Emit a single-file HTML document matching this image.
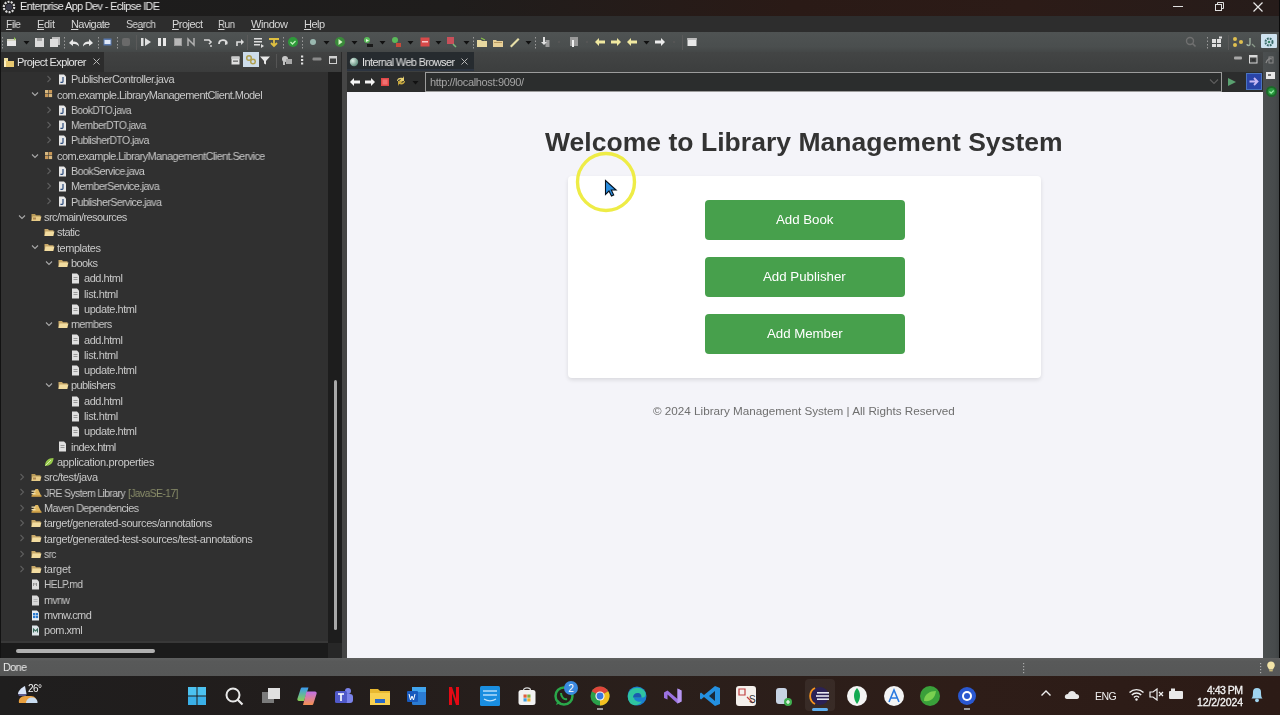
<!DOCTYPE html>
<html><head><meta charset="utf-8">
<style>
*{margin:0;padding:0;box-sizing:border-box}
html,body{width:1280px;height:715px;overflow:hidden;background:#2b2b2b;font-family:"Liberation Sans",sans-serif;position:relative}
.a{position:absolute}
.t{position:absolute;white-space:pre;will-change:transform}
</style></head><body>

<div class="a" style="left:0px;top:0px;width:1280px;height:16px;background:linear-gradient(90deg,#1c1c1c 0%,#1f1d1c 35%,#2a1a16 62%,#2c1b17 80%,#261c1a 100%);"></div>
<svg class="a" style="left:2px;top:0px;" width="14" height="14" viewBox="0 0 14 14"><circle cx="7" cy="7" r="5.2" fill="none" stroke="#d8d8d8" stroke-width="2.2" stroke-dasharray="2 1.2"/><circle cx="7" cy="7" r="3.2" fill="#3a3a48"/></svg>
<div class="t" style="left:20.00px;top:0.04px;font-size:11px;line-height:12.64px;color:#ececec;letter-spacing:-0.600px;transform:scaleX(0.9803);transform-origin:0 0;">Enterprise App Dev - Eclipse IDE</div>
<div class="a" style="left:1173px;top:6px;width:10px;height:1px;background:#e0e0e0;"></div>
<svg class="a" style="left:1213px;top:1px;" width="12" height="12" viewBox="0 0 12 12"><rect x="2.5" y="3.5" width="6" height="6" fill="none" stroke="#e0e0e0"/><path d="M4.5 3.5V1.5h6v6h-2" fill="none" stroke="#e0e0e0"/></svg>
<svg class="a" style="left:1252px;top:1px;" width="12" height="12" viewBox="0 0 12 12"><path d="M1.5 1.5l9 9M10.5 1.5l-9 9" stroke="#e8e8e8" stroke-width="1.2"/></svg>
<div class="a" style="left:0px;top:16px;width:1280px;height:16px;background:#2d2d2d;"></div>
<div class="t" style="left:6.00px;top:17.84px;font-size:11px;line-height:12.64px;color:#d6d6d6;letter-spacing:-0.600px;transform:scaleX(0.9414);transform-origin:0 0;"><u style="text-underline-offset:1px">F</u>ile</div>
<div class="t" style="left:37.00px;top:17.84px;font-size:11px;line-height:12.64px;color:#d6d6d6;letter-spacing:-0.323px;"><u style="text-underline-offset:1px">E</u>dit</div>
<div class="t" style="left:71.00px;top:17.84px;font-size:11px;line-height:12.64px;color:#d6d6d6;letter-spacing:-0.600px;transform:scaleX(0.9943);transform-origin:0 0;"><u style="text-underline-offset:1px">N</u>avigate</div>
<div class="t" style="left:126.00px;top:17.84px;font-size:11px;line-height:12.64px;color:#d6d6d6;letter-spacing:-0.600px;transform:scaleX(0.9416);transform-origin:0 0;">Se<u style="text-underline-offset:1px">a</u>rch</div>
<div class="t" style="left:172.00px;top:17.84px;font-size:11px;line-height:12.64px;color:#d6d6d6;letter-spacing:-0.542px;"><u style="text-underline-offset:1px">P</u>roject</div>
<div class="t" style="left:218.00px;top:17.84px;font-size:11px;line-height:12.64px;color:#d6d6d6;letter-spacing:-0.600px;transform:scaleX(0.8953);transform-origin:0 0;"><u style="text-underline-offset:1px">R</u>un</div>
<div class="t" style="left:251.00px;top:17.84px;font-size:11px;line-height:12.64px;color:#d6d6d6;letter-spacing:-0.425px;"><u style="text-underline-offset:1px">W</u>indow</div>
<div class="t" style="left:304.00px;top:17.84px;font-size:11px;line-height:12.64px;color:#d6d6d6;letter-spacing:-0.542px;"><u style="text-underline-offset:1px">H</u>elp</div>
<div class="a" style="left:0px;top:32px;width:1280px;height:20px;background:linear-gradient(#4f5353,#4a4e4e 75%,#444747);"></div>
<div id="toolbar">
<svg class="a" style="left:1px;top:36px;" width="3" height="13" viewBox="0 0 3 13"><rect x="1" y="1" width="1" height="1.5" fill="#9a9a9a"/><rect x="1" y="4.5" width="1" height="1.5" fill="#9a9a9a"/><rect x="1" y="8" width="1" height="1.5" fill="#9a9a9a"/><rect x="1" y="11" width="1" height="1.5" fill="#9a9a9a"/></svg>
<svg class="a" style="left:6px;top:36px;" width="12" height="12" viewBox="0 0 12 12"><rect x="1" y="3" width="9" height="7" fill="#e8e8e8"/><rect x="1" y="3" width="9" height="2" fill="#d0d0c0"/><path d="M8 1l2 2-2 1z" fill="#8bc34a"/></svg>
<svg class="a" style="left:23px;top:40px;" width="7" height="5" viewBox="0 0 7 5"><path d="M0.5 1h6l-3 3.5z" fill="#111"/></svg>
<svg class="a" style="left:34px;top:36px;" width="12" height="12" viewBox="0 0 12 12"><rect x="1" y="2" width="9" height="9" fill="#dcdcdc"/><rect x="3" y="2" width="5" height="3" fill="#a8a8a8"/></svg>
<svg class="a" style="left:49px;top:36px;" width="12" height="12" viewBox="0 0 12 12"><rect x="3" y="1" width="8" height="8" fill="#bcbcbc"/><rect x="1" y="3" width="8" height="8" fill="#dedede"/></svg>
<svg class="a" style="left:63px;top:36px;" width="3" height="13" viewBox="0 0 3 13"><rect x="1" y="1" width="1" height="1.5" fill="#9a9a9a"/><rect x="1" y="4.5" width="1" height="1.5" fill="#9a9a9a"/><rect x="1" y="8" width="1" height="1.5" fill="#9a9a9a"/><rect x="1" y="11" width="1" height="1.5" fill="#9a9a9a"/></svg>
<svg class="a" style="left:68px;top:36px;" width="12" height="12" viewBox="0 0 12 12"><path d="M1 7l4-4v2.5c3 0 6 1 6 5-1.5-2-3-2.5-6-2.5V10z" fill="#e8e8e8"/></svg>
<svg class="a" style="left:82px;top:36px;" width="12" height="12" viewBox="0 0 12 12"><path d="M11 7L7 3v2.5c-3 0-6 1-6 5 1.5-2 3-2.5 6-2.5V10z" fill="#e8e8e8"/></svg>
<svg class="a" style="left:97px;top:36px;" width="3" height="13" viewBox="0 0 3 13"><rect x="1" y="1" width="1" height="1.5" fill="#9a9a9a"/><rect x="1" y="4.5" width="1" height="1.5" fill="#9a9a9a"/><rect x="1" y="8" width="1" height="1.5" fill="#9a9a9a"/><rect x="1" y="11" width="1" height="1.5" fill="#9a9a9a"/></svg>
<svg class="a" style="left:102px;top:36px;" width="12" height="12" viewBox="0 0 12 12"><rect x="1.5" y="2.5" width="8" height="7" fill="#5a7ab0"/><rect x="2.5" y="4" width="6" height="4" fill="#dfe8f8"/></svg>
<svg class="a" style="left:116px;top:36px;" width="3" height="13" viewBox="0 0 3 13"><rect x="1" y="1" width="1" height="1.5" fill="#9a9a9a"/><rect x="1" y="4.5" width="1" height="1.5" fill="#9a9a9a"/><rect x="1" y="8" width="1" height="1.5" fill="#9a9a9a"/><rect x="1" y="11" width="1" height="1.5" fill="#9a9a9a"/></svg>
<svg class="a" style="left:120px;top:36px;" width="12" height="12" viewBox="0 0 12 12"><rect x="2" y="2" width="8" height="8" rx="2" fill="#6a6a6a"/></svg>
<div class="a" style="left:136px;top:35px;width:1px;height:15px;background:#5a5a5a;"></div>
<svg class="a" style="left:140px;top:36px;" width="12" height="12" viewBox="0 0 12 12"><rect x="1" y="2" width="2.5" height="8" fill="#e0e0e0"/><path d="M5 2l6 4-6 4z" fill="#e0e0e0"/></svg>
<svg class="a" style="left:156px;top:36px;" width="12" height="12" viewBox="0 0 12 12"><rect x="2" y="2" width="3" height="8" fill="#e8e8e8"/><rect x="7" y="2" width="3" height="8" fill="#e8e8e8"/></svg>
<svg class="a" style="left:171.5px;top:36px;" width="12" height="12" viewBox="0 0 12 12"><rect x="2" y="2" width="8" height="8" fill="#9a9a9a"/><rect x="3" y="3" width="6" height="6" fill="#b8b8b8"/></svg>
<svg class="a" style="left:186px;top:36px;" width="12" height="12" viewBox="0 0 12 12"><path d="M2 10V3l6 6V2" fill="none" stroke="#b0b0b0" stroke-width="1.5"/></svg>
<svg class="a" style="left:202px;top:36px;" width="12" height="12" viewBox="0 0 12 12"><path d="M2 4h5l2 2-2 2" fill="none" stroke="#dcdcdc" stroke-width="1.6"/><circle cx="9" cy="10" r="1" fill="#ccc"/></svg>
<svg class="a" style="left:217px;top:36px;" width="12" height="12" viewBox="0 0 12 12"><path d="M2 8c0-5 7-5 8-1" fill="none" stroke="#dcdcdc" stroke-width="1.8"/><path d="M8 5l3 3-3 1z" fill="#dcdcdc"/></svg>
<svg class="a" style="left:233px;top:36px;" width="12" height="12" viewBox="0 0 12 12"><path d="M4 10V6h5" fill="none" stroke="#dcdcdc" stroke-width="1.6"/><path d="M8 3l3 3-3 3z" fill="#dcdcdc"/></svg>
<div class="a" style="left:247px;top:35px;width:1px;height:15px;background:#5a5a5a;"></div>
<svg class="a" style="left:253px;top:36px;" width="12" height="12" viewBox="0 0 12 12"><rect x="1" y="2" width="8" height="1.5" fill="#ddd"/><rect x="1" y="5" width="8" height="1.5" fill="#ddd"/><rect x="1" y="8" width="6" height="1.5" fill="#ddd"/><path d="M8 8l3 2-3 2z" fill="#ddd"/></svg>
<svg class="a" style="left:268px;top:36px;" width="12" height="12" viewBox="0 0 12 12"><path d="M1 3h10M6 3v7M3 7l3 3 3-3" fill="none" stroke="#e0c040" stroke-width="1.8"/></svg>
<svg class="a" style="left:282px;top:36px;" width="3" height="13" viewBox="0 0 3 13"><rect x="1" y="1" width="1" height="1.5" fill="#9a9a9a"/><rect x="1" y="4.5" width="1" height="1.5" fill="#9a9a9a"/><rect x="1" y="8" width="1" height="1.5" fill="#9a9a9a"/><rect x="1" y="11" width="1" height="1.5" fill="#9a9a9a"/></svg>
<svg class="a" style="left:287px;top:36px;" width="12" height="12" viewBox="0 0 12 12"><circle cx="6" cy="6" r="5" fill="#2e9a3a"/><path d="M3.5 6l2 2 3-3" fill="none" stroke="#bff0b8" stroke-width="1.3"/></svg>
<svg class="a" style="left:301px;top:36px;" width="3" height="13" viewBox="0 0 3 13"><rect x="1" y="1" width="1" height="1.5" fill="#9a9a9a"/><rect x="1" y="4.5" width="1" height="1.5" fill="#9a9a9a"/><rect x="1" y="8" width="1" height="1.5" fill="#9a9a9a"/><rect x="1" y="11" width="1" height="1.5" fill="#9a9a9a"/></svg>
<svg class="a" style="left:307px;top:36px;" width="12" height="12" viewBox="0 0 12 12"><circle cx="6" cy="6" r="3" fill="#9ab8b0"/></svg>
<svg class="a" style="left:323px;top:40px;" width="7" height="5" viewBox="0 0 7 5"><path d="M0.5 1h6l-3 3.5z" fill="#111"/></svg>
<svg class="a" style="left:334px;top:36px;" width="12" height="12" viewBox="0 0 12 12"><circle cx="6" cy="6" r="5" fill="#3a8a3a"/><path d="M4.5 3l4 3-4 3z" fill="#d8f8c8"/></svg>
<svg class="a" style="left:351px;top:40px;" width="7" height="5" viewBox="0 0 7 5"><path d="M0.5 1h6l-3 3.5z" fill="#111"/></svg>
<svg class="a" style="left:362px;top:36px;" width="12" height="12" viewBox="0 0 12 12"><circle cx="5" cy="4" r="3" fill="#5aba5a"/><rect x="5" y="8" width="6" height="3" fill="#1a1a1a"/><path d="M4 3l3 1.5-3 1.5z" fill="#e8ffe0"/></svg>
<svg class="a" style="left:379px;top:40px;" width="7" height="5" viewBox="0 0 7 5"><path d="M0.5 1h6l-3 3.5z" fill="#111"/></svg>
<svg class="a" style="left:390px;top:36px;" width="12" height="12" viewBox="0 0 12 12"><circle cx="5" cy="4" r="3" fill="#5aba5a"/><rect x="6" y="7" width="5" height="4" fill="#c84a3a"/></svg>
<svg class="a" style="left:407px;top:40px;" width="7" height="5" viewBox="0 0 7 5"><path d="M0.5 1h6l-3 3.5z" fill="#111"/></svg>
<svg class="a" style="left:419px;top:36px;" width="12" height="12" viewBox="0 0 12 12"><rect x="1.5" y="1.5" width="9" height="9" fill="#d84a4a"/><rect x="3" y="5" width="6" height="1.5" fill="#f8c8c8"/></svg>
<svg class="a" style="left:435px;top:40px;" width="7" height="5" viewBox="0 0 7 5"><path d="M0.5 1h6l-3 3.5z" fill="#111"/></svg>
<svg class="a" style="left:446px;top:36px;" width="12" height="12" viewBox="0 0 12 12"><rect x="1" y="1" width="7" height="7" fill="#c8505a"/><path d="M7 8l3 3" stroke="#7ab87a" stroke-width="1.5"/></svg>
<svg class="a" style="left:463px;top:40px;" width="7" height="5" viewBox="0 0 7 5"><path d="M0.5 1h6l-3 3.5z" fill="#111"/></svg>
<svg class="a" style="left:472px;top:36px;" width="3" height="13" viewBox="0 0 3 13"><rect x="1" y="1" width="1" height="1.5" fill="#9a9a9a"/><rect x="1" y="4.5" width="1" height="1.5" fill="#9a9a9a"/><rect x="1" y="8" width="1" height="1.5" fill="#9a9a9a"/><rect x="1" y="11" width="1" height="1.5" fill="#9a9a9a"/></svg>
<svg class="a" style="left:476px;top:36px;" width="12" height="12" viewBox="0 0 12 12"><path d="M1 4h4l1 1h5v6H1z" fill="#e8d8a0"/><path d="M5 2l4 2" stroke="#8bc34a" stroke-width="1.2"/></svg>
<svg class="a" style="left:491.5px;top:36px;" width="12" height="12" viewBox="0 0 12 12"><path d="M1 4h3l1 1h6v6H1z" fill="#e8d098"/><rect x="2" y="6" width="8" height="1" fill="#b89860"/></svg>
<svg class="a" style="left:508px;top:36px;" width="12" height="12" viewBox="0 0 12 12"><path d="M2 10l8-8 1.5 1.5-8 8z" fill="#e8e0a8"/></svg>
<svg class="a" style="left:525px;top:40px;" width="7" height="5" viewBox="0 0 7 5"><path d="M0.5 1h6l-3 3.5z" fill="#111"/></svg>
<svg class="a" style="left:534px;top:36px;" width="3" height="13" viewBox="0 0 3 13"><rect x="1" y="1" width="1" height="1.5" fill="#9a9a9a"/><rect x="1" y="4.5" width="1" height="1.5" fill="#9a9a9a"/><rect x="1" y="8" width="1" height="1.5" fill="#9a9a9a"/><rect x="1" y="11" width="1" height="1.5" fill="#9a9a9a"/></svg>
<svg class="a" style="left:539px;top:36px;" width="12" height="12" viewBox="0 0 12 12"><rect x="4" y="1" width="2" height="7" fill="#e0e0e0"/><rect x="6.5" y="4" width="4" height="7" fill="#9a9a9a"/><path d="M2 6l3 3 3-3z" fill="#e0e0e0"/></svg>
<svg class="a" style="left:553px;top:36px;" width="12" height="12" viewBox="0 0 12 12"><rect x="5" y="5" width="2" height="2" fill="#555"/></svg>
<svg class="a" style="left:568px;top:36px;" width="12" height="12" viewBox="0 0 12 12"><rect x="2" y="1" width="8" height="9" fill="#9a9a9a"/><rect x="4" y="4" width="2" height="7" fill="#f0f0f0"/></svg>
<svg class="a" style="left:581px;top:36px;" width="12" height="12" viewBox="0 0 12 12"><rect x="5" y="5" width="2" height="2" fill="#555"/></svg>
<svg class="a" style="left:594px;top:36px;" width="12" height="12" viewBox="0 0 12 12"><path d="M1 6l4-4v2.5h6v3H5V10z" fill="#f0e8a0"/></svg>
<svg class="a" style="left:610px;top:36px;" width="12" height="12" viewBox="0 0 12 12"><path d="M11 6L7 2v2.5H1v3h6V10z" fill="#f0e8a0"/></svg>
<svg class="a" style="left:626px;top:36px;" width="12" height="12" viewBox="0 0 12 12"><path d="M1 6l4-4v2.5h6v3H5V10z" fill="#f0e8a0"/></svg>
<svg class="a" style="left:643px;top:40px;" width="7" height="5" viewBox="0 0 7 5"><path d="M0.5 1h6l-3 3.5z" fill="#111"/></svg>
<svg class="a" style="left:654px;top:36px;" width="12" height="12" viewBox="0 0 12 12"><path d="M11 6L7 2v2.5H1v3h6V10z" fill="#ececec"/></svg>
<svg class="a" style="left:668px;top:36px;" width="12" height="12" viewBox="0 0 12 12"><rect x="5" y="5" width="2" height="2" fill="#555"/></svg>
<div class="a" style="left:682px;top:35px;width:1px;height:15px;background:#5a5a5a;"></div>
<svg class="a" style="left:686px;top:36px;" width="12" height="12" viewBox="0 0 12 12"><rect x="1.5" y="2" width="9" height="8" fill="#e8e8e8"/><rect x="1.5" y="2" width="9" height="2" fill="#bdbdbd"/></svg>
<svg class="a" style="left:1185px;top:36px;" width="12" height="12" viewBox="0 0 12 12"><circle cx="5" cy="5" r="3.5" fill="none" stroke="#707070" stroke-width="1.4"/><path d="M7.5 7.5l3 3" stroke="#707070" stroke-width="1.6"/></svg>
<svg class="a" style="left:1206px;top:36px;" width="3" height="13" viewBox="0 0 3 13"><rect x="1" y="1" width="1" height="1.5" fill="#9a9a9a"/><rect x="1" y="4.5" width="1" height="1.5" fill="#9a9a9a"/><rect x="1" y="8" width="1" height="1.5" fill="#9a9a9a"/><rect x="1" y="11" width="1" height="1.5" fill="#9a9a9a"/></svg>
<svg class="a" style="left:1211px;top:36px;" width="12" height="12" viewBox="0 0 12 12"><rect x="1" y="3" width="4" height="4" fill="#e0e0e0"/><rect x="6" y="3" width="4" height="4" fill="#e0e0e0"/><rect x="1" y="8" width="4" height="3" fill="#e0e0e0"/><rect x="6" y="8" width="4" height="3" fill="#e0e0e0"/><rect x="8" y="0.5" width="3" height="2" fill="#e0e0e0"/></svg>
<div class="a" style="left:1228px;top:35px;width:1px;height:15px;background:#5a5a5a;"></div>
<svg class="a" style="left:1232px;top:36px;" width="12" height="12" viewBox="0 0 12 12"><circle cx="3" cy="3" r="2" fill="#e0c050"/><circle cx="9" cy="6" r="2" fill="#e0c050"/><circle cx="3" cy="9" r="2" fill="#e0c050"/></svg>
<svg class="a" style="left:1245px;top:36px;" width="12" height="12" viewBox="0 0 12 12"><path d="M5 2v6c0 2-3 2-3 0" fill="none" stroke="#a0b0a0" stroke-width="1.4"/><path d="M7 8l3 3" stroke="#8a9a8a" stroke-width="1.2"/></svg>
<div class="a" style="left:1261px;top:34px;width:16px;height:14px;background:#cfe3f0;border-radius:1px"></div>
<svg class="a" style="left:1263px;top:36px;" width="12" height="12" viewBox="0 0 12 12"><circle cx="6" cy="6" r="3.5" fill="none" stroke="#3a6a6a" stroke-width="2" stroke-dasharray="1.8 1"/><circle cx="6" cy="6" r="1.3" fill="#3a8a6a"/></svg>
</div>
<div class="a" style="left:0px;top:52px;width:341px;height:20px;background:linear-gradient(#414242,#3b3c3c);"></div>
<div class="a" style="left:1px;top:52px;width:103px;height:20px;background:#2c2c2c;"></div>
<svg class="a" style="left:3px;top:56px;" width="12" height="12" viewBox="0 0 12 12"><path d="M1 2h4v3H1z" fill="#f0e0a0"/><path d="M3 5h8v6H3z" fill="#e8c870"/><rect x="1" y="5" width="2" height="6" fill="#fff0c0"/></svg>
<div class="t" style="left:17.00px;top:56.05px;font-size:11px;line-height:12.64px;color:#e4e4e4;letter-spacing:-0.591px;">Project Explorer</div>
<svg class="a" style="left:92px;top:57px;" width="10" height="10" viewBox="0 0 10 10"><path d="M1.5 1.5l6 6M7.5 1.5l-6 6" stroke="#b8b8b8" stroke-width="1"/></svg>
<svg class="a" style="left:230px;top:55px;" width="11" height="11" viewBox="0 0 11 11"><path d="M1.5 1.5h8v8h-8z" fill="#e0e0e0"/><rect x="1.5" y="1.5" width="8" height="2.5" fill="#c8c8c8"/><rect x="3" y="5.5" width="5" height="1.3" fill="#666"/></svg>
<div class="a" style="left:243px;top:52px;width:16px;height:15px;background:#cddcea;"></div>
<svg class="a" style="left:244px;top:53px;" width="14" height="13" viewBox="0 0 14 13"><circle cx="5" cy="5" r="2.3" fill="none" stroke="#b0a050" stroke-width="1.5"/><circle cx="9" cy="8.5" r="2.3" fill="none" stroke="#b0a050" stroke-width="1.5"/></svg>
<svg class="a" style="left:259px;top:55px;" width="12" height="11" viewBox="0 0 12 11"><path d="M1 1.5h10L7 6v3.5L5 8.5V6z" fill="#e8e8e8"/></svg>
<div class="a" style="left:276px;top:54px;width:1px;height:14px;background:#555;"></div>
<svg class="a" style="left:281px;top:55px;" width="12" height="11" viewBox="0 0 12 11"><circle cx="4" cy="4" r="3" fill="#c8c8c8"/><rect x="5" y="4" width="6" height="5" fill="#a8a8a8"/><rect x="2" y="6" width="2" height="4" fill="#c0c0c0"/></svg>
<svg class="a" style="left:300px;top:55px;" width="5" height="11" viewBox="0 0 5 11"><rect x="1" y="0.5" width="2.2" height="2" fill="#e0e0e0"/><rect x="1" y="4" width="2.2" height="2" fill="#e0e0e0"/><rect x="1" y="7.5" width="2.2" height="2" fill="#e0e0e0"/></svg>
<svg class="a" style="left:312px;top:56px;" width="10" height="6" viewBox="0 0 10 6"><rect x="0.5" y="1.5" width="9" height="3" rx="1.2" fill="#8a8a8a"/></svg>
<svg class="a" style="left:328px;top:55px;" width="10" height="10" viewBox="0 0 10 10"><rect x="1.5" y="1.5" width="7" height="7" fill="none" stroke="#d0d0d0"/><rect x="1.5" y="1.5" width="7" height="2" fill="#d0d0d0"/></svg>
<div class="a" style="left:0px;top:72px;width:328px;height:571px;background:#303030;"></div>
<div class="a" style="left:0px;top:641px;width:328px;height:2px;background:#383838;"></div>
<div class="a" style="left:328px;top:72px;width:14px;height:572px;background:#1d1d1d;"></div>
<div class="a" style="left:334px;top:380px;width:3px;height:250px;background:#a8a8a8;border-radius:1.5px"></div>
<div class="a" style="left:0px;top:643px;width:342px;height:15px;background:#1b1b1b;"></div>
<div class="a" style="left:16px;top:648.5px;width:139px;height:4.5px;background:#b0b0b0;border-radius:2px"></div>
<div class="a" style="left:328px;top:643px;width:14px;height:15px;background:#272727;"></div>
<div class="a" style="left:342px;top:52px;width:5px;height:606px;background:#454545;"></div>
<div class="a" style="left:0px;top:0px;width:1px;height:676px;background:#121212;"></div>
<svg class="a" style="left:46px;top:75px;" width="6" height="8" viewBox="0 0 6 8"><path d="M1.5 1l3 3-3 3" fill="none" stroke="#5e5e5e" stroke-width="1.1"/></svg>
<svg class="a" style="left:58px;top:74px;" width="11" height="11" viewBox="0 0 11 11"><path d="M1 0.5h5l2 2v8H1z" fill="#e8e8e8"/><path d="M5 3v4.5c0 1-1.5 1.3-2.5.5" fill="none" stroke="#2a4a7a" stroke-width="1.2"/></svg>
<div class="t" style="left:70.70px;top:73.25px;font-size:11px;line-height:12.64px;color:#c8c8c8;letter-spacing:-0.551px;">PublisherController.java</div>
<svg class="a" style="left:31px;top:91px;" width="8" height="6" viewBox="0 0 8 6"><path d="M1 1.5l3 3 3-3" fill="none" stroke="#a8a8a8" stroke-width="1.1"/></svg>
<svg class="a" style="left:44px;top:89px;" width="11" height="11" viewBox="0 0 11 11"><rect x="1" y="1" width="3.3" height="3.3" fill="#d8b880"/><rect x="4.8" y="1" width="3.3" height="3.3" fill="#c89858"/><rect x="1" y="4.8" width="3.3" height="3.3" fill="#c89858"/><rect x="4.8" y="4.8" width="3.3" height="3.3" fill="#d8b880"/></svg>
<div class="t" style="left:57.30px;top:88.56px;font-size:11px;line-height:12.64px;color:#c8c8c8;letter-spacing:-0.546px;">com.example.LibraryManagementClient.Model</div>
<svg class="a" style="left:46px;top:106px;" width="6" height="8" viewBox="0 0 6 8"><path d="M1.5 1l3 3-3 3" fill="none" stroke="#5e5e5e" stroke-width="1.1"/></svg>
<svg class="a" style="left:58px;top:105px;" width="11" height="11" viewBox="0 0 11 11"><path d="M1 0.5h5l2 2v8H1z" fill="#e8e8e8"/><path d="M5 3v4.5c0 1-1.5 1.3-2.5.5" fill="none" stroke="#2a4a7a" stroke-width="1.2"/></svg>
<div class="t" style="left:70.70px;top:103.87px;font-size:11px;line-height:12.64px;color:#c8c8c8;letter-spacing:-0.600px;transform:scaleX(0.9378);transform-origin:0 0;">BookDTO.java</div>
<svg class="a" style="left:46px;top:121px;" width="6" height="8" viewBox="0 0 6 8"><path d="M1.5 1l3 3-3 3" fill="none" stroke="#5e5e5e" stroke-width="1.1"/></svg>
<svg class="a" style="left:58px;top:120px;" width="11" height="11" viewBox="0 0 11 11"><path d="M1 0.5h5l2 2v8H1z" fill="#e8e8e8"/><path d="M5 3v4.5c0 1-1.5 1.3-2.5.5" fill="none" stroke="#2a4a7a" stroke-width="1.2"/></svg>
<div class="t" style="left:70.70px;top:119.17px;font-size:11px;line-height:12.64px;color:#c8c8c8;letter-spacing:-0.600px;transform:scaleX(0.9555);transform-origin:0 0;">MemberDTO.java</div>
<svg class="a" style="left:46px;top:136px;" width="6" height="8" viewBox="0 0 6 8"><path d="M1.5 1l3 3-3 3" fill="none" stroke="#5e5e5e" stroke-width="1.1"/></svg>
<svg class="a" style="left:58px;top:135px;" width="11" height="11" viewBox="0 0 11 11"><path d="M1 0.5h5l2 2v8H1z" fill="#e8e8e8"/><path d="M5 3v4.5c0 1-1.5 1.3-2.5.5" fill="none" stroke="#2a4a7a" stroke-width="1.2"/></svg>
<div class="t" style="left:70.70px;top:134.48px;font-size:11px;line-height:12.64px;color:#c8c8c8;letter-spacing:-0.600px;transform:scaleX(0.9488);transform-origin:0 0;">PublisherDTO.java</div>
<svg class="a" style="left:31px;top:153px;" width="8" height="6" viewBox="0 0 8 6"><path d="M1 1.5l3 3 3-3" fill="none" stroke="#a8a8a8" stroke-width="1.1"/></svg>
<svg class="a" style="left:44px;top:151px;" width="11" height="11" viewBox="0 0 11 11"><rect x="1" y="1" width="3.3" height="3.3" fill="#d8b880"/><rect x="4.8" y="1" width="3.3" height="3.3" fill="#c89858"/><rect x="1" y="4.8" width="3.3" height="3.3" fill="#c89858"/><rect x="4.8" y="4.8" width="3.3" height="3.3" fill="#d8b880"/></svg>
<div class="t" style="left:57.30px;top:149.79px;font-size:11px;line-height:12.64px;color:#c8c8c8;letter-spacing:-0.600px;transform:scaleX(0.9973);transform-origin:0 0;">com.example.LibraryManagementClient.Service</div>
<svg class="a" style="left:46px;top:167px;" width="6" height="8" viewBox="0 0 6 8"><path d="M1.5 1l3 3-3 3" fill="none" stroke="#5e5e5e" stroke-width="1.1"/></svg>
<svg class="a" style="left:58px;top:166px;" width="11" height="11" viewBox="0 0 11 11"><path d="M1 0.5h5l2 2v8H1z" fill="#e8e8e8"/><path d="M5 3v4.5c0 1-1.5 1.3-2.5.5" fill="none" stroke="#2a4a7a" stroke-width="1.2"/></svg>
<div class="t" style="left:70.70px;top:165.10px;font-size:11px;line-height:12.64px;color:#c8c8c8;letter-spacing:-0.600px;transform:scaleX(0.9724);transform-origin:0 0;">BookService.java</div>
<svg class="a" style="left:46px;top:182px;" width="6" height="8" viewBox="0 0 6 8"><path d="M1.5 1l3 3-3 3" fill="none" stroke="#5e5e5e" stroke-width="1.1"/></svg>
<svg class="a" style="left:58px;top:181px;" width="11" height="11" viewBox="0 0 11 11"><path d="M1 0.5h5l2 2v8H1z" fill="#e8e8e8"/><path d="M5 3v4.5c0 1-1.5 1.3-2.5.5" fill="none" stroke="#2a4a7a" stroke-width="1.2"/></svg>
<div class="t" style="left:70.70px;top:180.41px;font-size:11px;line-height:12.64px;color:#c8c8c8;letter-spacing:-0.600px;transform:scaleX(0.9848);transform-origin:0 0;">MemberService.java</div>
<svg class="a" style="left:46px;top:197px;" width="6" height="8" viewBox="0 0 6 8"><path d="M1.5 1l3 3-3 3" fill="none" stroke="#5e5e5e" stroke-width="1.1"/></svg>
<svg class="a" style="left:58px;top:196px;" width="11" height="11" viewBox="0 0 11 11"><path d="M1 0.5h5l2 2v8H1z" fill="#e8e8e8"/><path d="M5 3v4.5c0 1-1.5 1.3-2.5.5" fill="none" stroke="#2a4a7a" stroke-width="1.2"/></svg>
<div class="t" style="left:70.70px;top:195.72px;font-size:11px;line-height:12.64px;color:#c8c8c8;letter-spacing:-0.600px;transform:scaleX(0.9693);transform-origin:0 0;">PublisherService.java</div>
<svg class="a" style="left:18px;top:214px;" width="8" height="6" viewBox="0 0 8 6"><path d="M1 1.5l3 3 3-3" fill="none" stroke="#a8a8a8" stroke-width="1.1"/></svg>
<svg class="a" style="left:31px;top:212px;" width="11" height="11" viewBox="0 0 11 11"><path d="M0.5 2h3.5l1 1.2h4.5V9H0.5z" fill="#b89a58"/><path d="M1.5 4.5h9L9 9H0.5z" fill="#e8cc88"/><rect x="2" y="5.5" width="3" height="2" fill="#b08850"/></svg>
<div class="t" style="left:44.00px;top:211.03px;font-size:11px;line-height:12.64px;color:#c8c8c8;letter-spacing:-0.572px;">src/main/resources</div>
<svg class="a" style="left:44px;top:227px;" width="11" height="11" viewBox="0 0 11 11"><path d="M0.5 2h3.5l1 1.2h4.5V9H0.5z" fill="#c8a868"/><path d="M1.5 4.5h9L9 9H0.5z" fill="#f2dca0"/></svg>
<div class="t" style="left:57.30px;top:226.34px;font-size:11px;line-height:12.64px;color:#c8c8c8;letter-spacing:-0.537px;">static</div>
<svg class="a" style="left:31px;top:244px;" width="8" height="6" viewBox="0 0 8 6"><path d="M1 1.5l3 3 3-3" fill="none" stroke="#a8a8a8" stroke-width="1.1"/></svg>
<svg class="a" style="left:44px;top:242px;" width="11" height="11" viewBox="0 0 11 11"><path d="M0.5 2h3.5l1 1.2h4.5V9H0.5z" fill="#c8a868"/><path d="M1.5 4.5h9L9 9H0.5z" fill="#f2dca0"/></svg>
<div class="t" style="left:57.30px;top:241.65px;font-size:11px;line-height:12.64px;color:#c8c8c8;letter-spacing:-0.475px;">templates</div>
<svg class="a" style="left:45px;top:260px;" width="8" height="6" viewBox="0 0 8 6"><path d="M1 1.5l3 3 3-3" fill="none" stroke="#a8a8a8" stroke-width="1.1"/></svg>
<svg class="a" style="left:58px;top:258px;" width="11" height="11" viewBox="0 0 11 11"><path d="M0.5 2h3.5l1 1.2h4.5V9H0.5z" fill="#c8a868"/><path d="M1.5 4.5h9L9 9H0.5z" fill="#f2dca0"/></svg>
<div class="t" style="left:70.70px;top:256.97px;font-size:11px;line-height:12.64px;color:#c8c8c8;letter-spacing:-0.600px;transform:scaleX(0.9867);transform-origin:0 0;">books</div>
<svg class="a" style="left:71px;top:273px;" width="11" height="11" viewBox="0 0 11 11"><path d="M1 0.5h5l2 2v8H1z" fill="#e0e0e0"/><rect x="2.5" y="4" width="4" height="1" fill="#999"/><rect x="2.5" y="6" width="4" height="1" fill="#999"/></svg>
<div class="t" style="left:84.00px;top:272.27px;font-size:11px;line-height:12.64px;color:#c8c8c8;letter-spacing:-0.458px;">add.html</div>
<svg class="a" style="left:71px;top:288px;" width="11" height="11" viewBox="0 0 11 11"><path d="M1 0.5h5l2 2v8H1z" fill="#e0e0e0"/><rect x="2.5" y="4" width="4" height="1" fill="#999"/><rect x="2.5" y="6" width="4" height="1" fill="#999"/></svg>
<div class="t" style="left:84.00px;top:287.59px;font-size:11px;line-height:12.64px;color:#c8c8c8;letter-spacing:-0.373px;">list.html</div>
<svg class="a" style="left:71px;top:304px;" width="11" height="11" viewBox="0 0 11 11"><path d="M1 0.5h5l2 2v8H1z" fill="#e0e0e0"/><rect x="2.5" y="4" width="4" height="1" fill="#999"/><rect x="2.5" y="6" width="4" height="1" fill="#999"/></svg>
<div class="t" style="left:84.00px;top:302.89px;font-size:11px;line-height:12.64px;color:#c8c8c8;letter-spacing:-0.448px;">update.html</div>
<svg class="a" style="left:45px;top:321px;" width="8" height="6" viewBox="0 0 8 6"><path d="M1 1.5l3 3 3-3" fill="none" stroke="#a8a8a8" stroke-width="1.1"/></svg>
<svg class="a" style="left:58px;top:319px;" width="11" height="11" viewBox="0 0 11 11"><path d="M0.5 2h3.5l1 1.2h4.5V9H0.5z" fill="#c8a868"/><path d="M1.5 4.5h9L9 9H0.5z" fill="#f2dca0"/></svg>
<div class="t" style="left:70.70px;top:318.21px;font-size:11px;line-height:12.64px;color:#c8c8c8;letter-spacing:-0.600px;transform:scaleX(0.9753);transform-origin:0 0;">members</div>
<svg class="a" style="left:71px;top:334px;" width="11" height="11" viewBox="0 0 11 11"><path d="M1 0.5h5l2 2v8H1z" fill="#e0e0e0"/><rect x="2.5" y="4" width="4" height="1" fill="#999"/><rect x="2.5" y="6" width="4" height="1" fill="#999"/></svg>
<div class="t" style="left:84.00px;top:333.51px;font-size:11px;line-height:12.64px;color:#c8c8c8;letter-spacing:-0.458px;">add.html</div>
<svg class="a" style="left:71px;top:350px;" width="11" height="11" viewBox="0 0 11 11"><path d="M1 0.5h5l2 2v8H1z" fill="#e0e0e0"/><rect x="2.5" y="4" width="4" height="1" fill="#999"/><rect x="2.5" y="6" width="4" height="1" fill="#999"/></svg>
<div class="t" style="left:84.00px;top:348.82px;font-size:11px;line-height:12.64px;color:#c8c8c8;letter-spacing:-0.373px;">list.html</div>
<svg class="a" style="left:71px;top:365px;" width="11" height="11" viewBox="0 0 11 11"><path d="M1 0.5h5l2 2v8H1z" fill="#e0e0e0"/><rect x="2.5" y="4" width="4" height="1" fill="#999"/><rect x="2.5" y="6" width="4" height="1" fill="#999"/></svg>
<div class="t" style="left:84.00px;top:364.13px;font-size:11px;line-height:12.64px;color:#c8c8c8;letter-spacing:-0.448px;">update.html</div>
<svg class="a" style="left:45px;top:382px;" width="8" height="6" viewBox="0 0 8 6"><path d="M1 1.5l3 3 3-3" fill="none" stroke="#a8a8a8" stroke-width="1.1"/></svg>
<svg class="a" style="left:58px;top:380px;" width="11" height="11" viewBox="0 0 11 11"><path d="M0.5 2h3.5l1 1.2h4.5V9H0.5z" fill="#c8a868"/><path d="M1.5 4.5h9L9 9H0.5z" fill="#f2dca0"/></svg>
<div class="t" style="left:70.70px;top:379.44px;font-size:11px;line-height:12.64px;color:#c8c8c8;letter-spacing:-0.593px;">publishers</div>
<svg class="a" style="left:71px;top:396px;" width="11" height="11" viewBox="0 0 11 11"><path d="M1 0.5h5l2 2v8H1z" fill="#e0e0e0"/><rect x="2.5" y="4" width="4" height="1" fill="#999"/><rect x="2.5" y="6" width="4" height="1" fill="#999"/></svg>
<div class="t" style="left:84.00px;top:394.75px;font-size:11px;line-height:12.64px;color:#c8c8c8;letter-spacing:-0.458px;">add.html</div>
<svg class="a" style="left:71px;top:411px;" width="11" height="11" viewBox="0 0 11 11"><path d="M1 0.5h5l2 2v8H1z" fill="#e0e0e0"/><rect x="2.5" y="4" width="4" height="1" fill="#999"/><rect x="2.5" y="6" width="4" height="1" fill="#999"/></svg>
<div class="t" style="left:84.00px;top:410.06px;font-size:11px;line-height:12.64px;color:#c8c8c8;letter-spacing:-0.373px;">list.html</div>
<svg class="a" style="left:71px;top:426px;" width="11" height="11" viewBox="0 0 11 11"><path d="M1 0.5h5l2 2v8H1z" fill="#e0e0e0"/><rect x="2.5" y="4" width="4" height="1" fill="#999"/><rect x="2.5" y="6" width="4" height="1" fill="#999"/></svg>
<div class="t" style="left:84.00px;top:425.38px;font-size:11px;line-height:12.64px;color:#c8c8c8;letter-spacing:-0.448px;">update.html</div>
<svg class="a" style="left:58px;top:441px;" width="11" height="11" viewBox="0 0 11 11"><path d="M1 0.5h5l2 2v8H1z" fill="#e0e0e0"/><rect x="2.5" y="4" width="4" height="1" fill="#999"/><rect x="2.5" y="6" width="4" height="1" fill="#999"/></svg>
<div class="t" style="left:70.70px;top:440.69px;font-size:11px;line-height:12.64px;color:#c8c8c8;letter-spacing:-0.538px;">index.html</div>
<svg class="a" style="left:44px;top:457px;" width="11" height="11" viewBox="0 0 11 11"><path d="M1 9C1 4 4 1 9.5 1 9.5 6 6 9 1 9z" fill="#96c84a"/><path d="M1.5 8.5L7 3" stroke="#e8f8c8" stroke-width="0.8"/></svg>
<div class="t" style="left:57.30px;top:456.00px;font-size:11px;line-height:12.64px;color:#c8c8c8;letter-spacing:-0.342px;">application.properties</div>
<svg class="a" style="left:19px;top:473px;" width="6" height="8" viewBox="0 0 6 8"><path d="M1.5 1l3 3-3 3" fill="none" stroke="#5e5e5e" stroke-width="1.1"/></svg>
<svg class="a" style="left:31px;top:472px;" width="11" height="11" viewBox="0 0 11 11"><path d="M0.5 2h3.5l1 1.2h4.5V9H0.5z" fill="#b89a58"/><path d="M1.5 4.5h9L9 9H0.5z" fill="#e8cc88"/><rect x="2" y="5.5" width="3" height="2" fill="#b08850"/></svg>
<div class="t" style="left:44.00px;top:471.31px;font-size:11px;line-height:12.64px;color:#c8c8c8;letter-spacing:-0.391px;">src/test/java</div>
<svg class="a" style="left:19px;top:488px;" width="6" height="8" viewBox="0 0 6 8"><path d="M1.5 1l3 3-3 3" fill="none" stroke="#5e5e5e" stroke-width="1.1"/></svg>
<svg class="a" style="left:31px;top:487px;" width="11" height="11" viewBox="0 0 11 11"><path d="M0.5 9.5L4.5 2h2.5l3.5 7.5z" fill="#e0b860"/><rect x="0.5" y="3.5" width="4" height="1.3" fill="#f0e0b0"/><rect x="0.5" y="6" width="4" height="1.3" fill="#f0e0b0"/><rect x="0.5" y="8.3" width="10" height="1.3" fill="#c89840"/></svg>
<div class="t" style="left:44.00px;top:486.62px;font-size:11px;line-height:12.64px;color:#c8c8c8;letter-spacing:-0.600px;transform:scaleX(0.9367);transform-origin:0 0;">JRE System Library</div>
<div class="t" style="left:128.00px;top:486.62px;font-size:11px;line-height:12.64px;color:#8a8e6a;letter-spacing:-0.600px;transform:scaleX(0.9365);transform-origin:0 0;">[JavaSE-17]</div>
<svg class="a" style="left:19px;top:504px;" width="6" height="8" viewBox="0 0 6 8"><path d="M1.5 1l3 3-3 3" fill="none" stroke="#5e5e5e" stroke-width="1.1"/></svg>
<svg class="a" style="left:31px;top:503px;" width="11" height="11" viewBox="0 0 11 11"><path d="M0.5 9.5L4.5 2h2.5l3.5 7.5z" fill="#e0b860"/><rect x="0.5" y="3.5" width="4" height="1.3" fill="#f0e0b0"/><rect x="0.5" y="6" width="4" height="1.3" fill="#f0e0b0"/><rect x="0.5" y="8.3" width="10" height="1.3" fill="#c89840"/></svg>
<div class="t" style="left:44.00px;top:501.93px;font-size:11px;line-height:12.64px;color:#c8c8c8;letter-spacing:-0.600px;transform:scaleX(0.9875);transform-origin:0 0;">Maven Dependencies</div>
<svg class="a" style="left:19px;top:519px;" width="6" height="8" viewBox="0 0 6 8"><path d="M1.5 1l3 3-3 3" fill="none" stroke="#5e5e5e" stroke-width="1.1"/></svg>
<svg class="a" style="left:31px;top:518px;" width="11" height="11" viewBox="0 0 11 11"><path d="M0.5 2h3.5l1 1.2h4.5V9H0.5z" fill="#c8a868"/><path d="M1.5 4.5h9L9 9H0.5z" fill="#f2dca0"/></svg>
<div class="t" style="left:44.00px;top:517.24px;font-size:11px;line-height:12.64px;color:#c8c8c8;letter-spacing:-0.416px;">target/generated-sources/annotations</div>
<svg class="a" style="left:19px;top:534px;" width="6" height="8" viewBox="0 0 6 8"><path d="M1.5 1l3 3-3 3" fill="none" stroke="#5e5e5e" stroke-width="1.1"/></svg>
<svg class="a" style="left:31px;top:533px;" width="11" height="11" viewBox="0 0 11 11"><path d="M0.5 2h3.5l1 1.2h4.5V9H0.5z" fill="#c8a868"/><path d="M1.5 4.5h9L9 9H0.5z" fill="#f2dca0"/></svg>
<div class="t" style="left:44.00px;top:532.54px;font-size:11px;line-height:12.64px;color:#c8c8c8;letter-spacing:-0.374px;">target/generated-test-sources/test-annotations</div>
<svg class="a" style="left:19px;top:550px;" width="6" height="8" viewBox="0 0 6 8"><path d="M1.5 1l3 3-3 3" fill="none" stroke="#5e5e5e" stroke-width="1.1"/></svg>
<svg class="a" style="left:31px;top:549px;" width="11" height="11" viewBox="0 0 11 11"><path d="M0.5 2h3.5l1 1.2h4.5V9H0.5z" fill="#c8a868"/><path d="M1.5 4.5h9L9 9H0.5z" fill="#f2dca0"/></svg>
<div class="t" style="left:44.00px;top:547.86px;font-size:11px;line-height:12.64px;color:#c8c8c8;letter-spacing:-0.600px;transform:scaleX(0.9130);transform-origin:0 0;">src</div>
<svg class="a" style="left:19px;top:565px;" width="6" height="8" viewBox="0 0 6 8"><path d="M1.5 1l3 3-3 3" fill="none" stroke="#5e5e5e" stroke-width="1.1"/></svg>
<svg class="a" style="left:31px;top:564px;" width="11" height="11" viewBox="0 0 11 11"><path d="M0.5 2h3.5l1 1.2h4.5V9H0.5z" fill="#c8a868"/><path d="M1.5 4.5h9L9 9H0.5z" fill="#f2dca0"/></svg>
<div class="t" style="left:44.00px;top:563.17px;font-size:11px;line-height:12.64px;color:#c8c8c8;letter-spacing:-0.268px;">target</div>
<svg class="a" style="left:31px;top:579px;" width="11" height="11" viewBox="0 0 11 11"><path d="M1 0.5h5l2 2v8H1z" fill="#dcdcdc"/><path d="M2.5 7V4l1.5 1.5L5.5 4v3" fill="none" stroke="#888" stroke-width="0.9"/></svg>
<div class="t" style="left:44.00px;top:578.48px;font-size:11px;line-height:12.64px;color:#c8c8c8;letter-spacing:-0.600px;transform:scaleX(0.9273);transform-origin:0 0;">HELP.md</div>
<svg class="a" style="left:31px;top:595px;" width="11" height="11" viewBox="0 0 11 11"><path d="M1 0.5h5l2 2v8H1z" fill="#d8d8d8"/><rect x="2.5" y="4" width="4" height="0.8" fill="#aaa"/><rect x="2.5" y="6" width="4" height="0.8" fill="#aaa"/></svg>
<div class="t" style="left:44.00px;top:593.78px;font-size:11px;line-height:12.64px;color:#c8c8c8;letter-spacing:-0.600px;transform:scaleX(0.9690);transform-origin:0 0;">mvnw</div>
<svg class="a" style="left:31px;top:610px;" width="11" height="11" viewBox="0 0 11 11"><path d="M1 0.5h5l2 2v8H1z" fill="#e8eef4"/><rect x="2" y="3" width="2.3" height="2.3" fill="#2a7ad0"/><rect x="4.8" y="3" width="2.3" height="2.3" fill="#2a7ad0"/><rect x="2" y="5.8" width="2.3" height="2.3" fill="#2a7ad0"/><rect x="4.8" y="5.8" width="2.3" height="2.3" fill="#2a7ad0"/></svg>
<div class="t" style="left:44.00px;top:609.10px;font-size:11px;line-height:12.64px;color:#c8c8c8;letter-spacing:-0.600px;transform:scaleX(0.9902);transform-origin:0 0;">mvnw.cmd</div>
<svg class="a" style="left:31px;top:625px;" width="11" height="11" viewBox="0 0 11 11"><path d="M1 0.5h5l2 2v8H1z" fill="#dce4e8"/><path d="M2.5 7.5V4l2 2 2-2v3.5" fill="none" stroke="#3a6a5a" stroke-width="1.1"/></svg>
<div class="t" style="left:44.00px;top:624.40px;font-size:11px;line-height:12.64px;color:#c8c8c8;letter-spacing:-0.477px;">pom.xml</div>
<div class="a" style="left:347px;top:52px;width:916px;height:20px;background:linear-gradient(#434545,#3c3e3e);"></div>
<div class="a" style="left:347px;top:52px;width:127px;height:17px;background:#262b2f;"></div>
<div class="a" style="left:347px;top:69px;width:127px;height:2px;background:#2c3440;"></div>
<svg class="a" style="left:349px;top:57px;" width="10" height="10" viewBox="0 0 10 10"><defs><radialGradient id="gl" cx="0.35" cy="0.35" r="0.7"><stop offset="0" stop-color="#e0f0e8"/><stop offset="1" stop-color="#5a8a7a"/></radialGradient></defs><circle cx="5" cy="5" r="4.2" fill="url(#gl)"/></svg>
<div class="t" style="left:362.00px;top:56.05px;font-size:11px;line-height:12.64px;color:#e6e6e6;letter-spacing:-0.600px;transform:scaleX(0.9875);transform-origin:0 0;">Internal Web Browser</div>
<svg class="a" style="left:460px;top:57px;" width="10" height="10" viewBox="0 0 10 10"><path d="M1.5 1.5l6 6M7.5 1.5l-6 6" stroke="#b8b8b8" stroke-width="1"/></svg>
<svg class="a" style="left:1233px;top:55px;" width="10" height="6" viewBox="0 0 10 6"><rect x="1" y="1.5" width="8" height="3" rx="1" fill="#a8a8a8"/></svg>
<svg class="a" style="left:1248px;top:54px;" width="11" height="11" viewBox="0 0 11 11"><rect x="1.5" y="1.5" width="7.5" height="7.5" fill="none" stroke="#d8d8d8"/><rect x="1.5" y="1.5" width="7.5" height="2" fill="#d8d8d8"/><rect x="4" y="5" width="3" height="2" fill="#333"/></svg>
<div class="a" style="left:347px;top:72px;width:916px;height:20px;background:#2c2d2d;"></div>
<svg class="a" style="left:349px;top:72px;top:76px" width="12" height="12" viewBox="0 0 12 12"><path d="M1 6l4-4v2.5h6v3H5V10z" fill="#f4f4f4"/></svg>
<svg class="a" style="left:364px;top:76px;" width="12" height="12" viewBox="0 0 12 12"><path d="M11 6L7 2v2.5H1v3h6V10z" fill="#f4f4f4"/></svg>
<svg class="a" style="left:379px;top:76px;" width="12" height="12" viewBox="0 0 12 12"><rect x="2" y="2" width="8" height="8" fill="#e04848"/><rect x="3.5" y="3.5" width="5" height="5" fill="#f07070"/></svg>
<svg class="a" style="left:395px;top:75px;" width="12" height="12" viewBox="0 0 12 12"><path d="M2 6c0-3 3-4 6-3l1-2v5H4l2-1.5C4.5 4 3 5 3 6z" fill="#e8d070"/><path d="M10 6c0 3-3 4-6 3l-1 2V6h5l-2 1.5C7.5 8 9 7 9 6z" fill="#c8a840"/></svg>
<svg class="a" style="left:412px;top:80px;" width="7" height="5" viewBox="0 0 7 5"><path d="M0.5 1h6l-3 3.5z" fill="#111"/></svg>
<div class="a" style="left:425px;top:72px;width:797px;height:20px;background:#9c9c9c;"></div>
<div class="a" style="left:426px;top:73px;width:795px;height:18px;background:#2b2d2d;"></div>
<div class="t" style="left:429.50px;top:75.55px;font-size:11px;line-height:12.64px;color:#a4a4a4;letter-spacing:-0.358px;">http://localhost:9090/</div>
<svg class="a" style="left:1209px;top:78px;" width="11" height="8" viewBox="0 0 11 8"><path d="M1 1.5l4 4 4-4" fill="none" stroke="#5e5e5e" stroke-width="1.1"/></svg>
<svg class="a" style="left:1226px;top:76px;" width="12" height="12" viewBox="0 0 12 12"><path d="M2 2l8 4-8 4z" fill="#5aa070"/></svg>
<div class="a" style="left:1246px;top:73px;width:16px;height:17px;background:#4a74c0;"></div>
<div class="a" style="left:1247px;top:74px;width:14px;height:15px;background:#2a44a8;"></div>
<svg class="a" style="left:1247px;top:75px;" width="14" height="12" viewBox="0 0 14 12"><path d="M2.5 6.5h7M7 3l3.5 3.5L7 10" fill="none" stroke="#c8b8f4" stroke-width="1.8"/></svg>
<div class="a" style="left:347px;top:92px;width:916px;height:566px;background:#f4f4f9;overflow:hidden">
</div>
<div class="a" style="left:568px;top:176px;width:473px;height:202px;background:#ffffff;border-radius:4px;box-shadow:0 2px 4px rgba(0,0,0,0.11)"></div>
<div class="t" style="left:545.20px;top:126.52px;font-size:26.5px;line-height:30.45px;color:#333333;letter-spacing:0.034px;font-weight:bold;">Welcome to Library Management System</div>
<div class="a" style="left:705px;top:200px;width:200px;height:40px;background:#47a04c;border-radius:4px"></div>
<div class="a" style="left:705px;top:257px;width:200px;height:40px;background:#47a04c;border-radius:4px"></div>
<div class="a" style="left:705px;top:314px;width:200px;height:40px;background:#47a04c;border-radius:4px"></div>
<div class="t" style="left:775.80px;top:212.16px;font-size:13.3px;line-height:15.28px;color:#ffffff;letter-spacing:-0.039px;">Add Book</div>
<div class="t" style="left:763.20px;top:269.16px;font-size:13.3px;line-height:15.28px;color:#ffffff;letter-spacing:0.000px;">Add Publisher</div>
<div class="t" style="left:767.00px;top:326.16px;font-size:13.3px;line-height:15.28px;color:#ffffff;letter-spacing:-0.047px;">Add Member</div>
<div class="t" style="left:653.40px;top:403.71px;font-size:11.7px;line-height:13.44px;color:#6f6f6f;letter-spacing:-0.006px;">© 2024 Library Management System | All Rights Reserved</div>
<svg class="a" style="left:574px;top:150px;" width="64" height="64" viewBox="0 0 64 64"><circle cx="32" cy="32" r="28.5" fill="none" stroke="#eeec46" stroke-width="3.4"/></svg>
<svg class="a" style="left:604px;top:179px;" width="14" height="19" viewBox="0 0 14 19"><path d="M1.5 1.5v14l3.5-3.5 2.5 5 2.2-1-2.4-5h4.8z" fill="#2a8ee0" stroke="#06121e" stroke-width="1.1"/></svg>
<div class="a" style="left:1263px;top:52px;width:17px;height:606px;background:linear-gradient(90deg,#4b4f50,#474b4c 70%,#3e4243);"></div>
<div class="a" style="left:1279px;top:0px;width:1px;height:676px;background:#0a0a0a;"></div>
<svg class="a" style="left:1264px;top:55px;" width="14" height="10" viewBox="0 0 14 10"><path d="M2 8c1-4 4-5 6-4" fill="none" stroke="#8a8a8a" stroke-width="1.2"/><rect x="5" y="2" width="4" height="6" fill="none" stroke="#8a8a8a"/></svg>
<svg class="a" style="left:1265px;top:71px;" width="12" height="9" viewBox="0 0 12 9"><rect x="1" y="1" width="9" height="7" fill="#e8e8e8"/><rect x="3" y="3" width="3" height="2" fill="#777"/></svg>
<svg class="a" style="left:1265px;top:85px;" width="13" height="13" viewBox="0 0 13 13"><circle cx="6.5" cy="6.5" r="5.5" fill="#1c6a2a"/><circle cx="6.5" cy="6.5" r="3.6" fill="#2a9a40"/><path d="M4.5 6.5l1.6 1.6 2.6-2.6" fill="none" stroke="#9af0a8" stroke-width="1.2"/></svg>
<div class="a" style="left:0px;top:658px;width:1280px;height:18px;background:linear-gradient(#5e5f5f,#585959 20%,#565757);"></div>
<div class="t" style="left:3.00px;top:660.54px;font-size:11px;line-height:12.64px;color:#e8e8e8;letter-spacing:-0.600px;transform:scaleX(0.9797);transform-origin:0 0;">Done</div>
<svg class="a" style="left:1021.5px;top:662px;" width="4" height="12" viewBox="0 0 4 12"><rect x="1" y="1" width="1.2" height="1.2" fill="#aaa"/><rect x="1" y="4" width="1.2" height="1.2" fill="#aaa"/><rect x="1" y="7" width="1.2" height="1.2" fill="#aaa"/><rect x="1" y="10" width="1.2" height="1.2" fill="#aaa"/></svg>
<svg class="a" style="left:1259px;top:662px;" width="4" height="12" viewBox="0 0 4 12"><rect x="1" y="1" width="1.2" height="1.2" fill="#aaa"/><rect x="1" y="4" width="1.2" height="1.2" fill="#aaa"/><rect x="1" y="7" width="1.2" height="1.2" fill="#aaa"/><rect x="1" y="10" width="1.2" height="1.2" fill="#aaa"/></svg>
<svg class="a" style="left:1265px;top:660px;" width="12" height="14" viewBox="0 0 12 14"><path d="M6 1.5c2.2 0 3.8 1.7 3.8 3.8 0 1.8-1.3 2.8-1.8 4.2H4C3.5 8.1 2.2 7.1 2.2 5.3 2.2 3.2 3.8 1.5 6 1.5z" fill="#f2e4a8"/><rect x="4.3" y="9.8" width="3.4" height="1.6" fill="#c8b878"/></svg>
<div class="a" style="left:0px;top:676px;width:1280px;height:39px;background:linear-gradient(90deg,#1f1e1e 0%,#221d1c 25%,#2a1f1b 50%,#2e1d18 75%,#2c1b16 100%);"></div>
<svg class="a" style="left:15px;top:682px;" width="28" height="24" viewBox="0 0 28 24"><path d="M3 12c0-3 3-6 7-8l1.5 8z" fill="#d8e4f8"/><path d="M3 12h9l-1.5 2H4z" fill="#5a5a8a"/><path d="M4 21c-1-4 2-7 6-7h6c4 0 6 3 5.5 7z" fill="#e8a040"/><path d="M11 21c0-3 3-6 6-5.5 3 0 6 2 5.5 5.5z" fill="#c8dcf0"/></svg>
<div class="t" style="left:28.40px;top:682.75px;font-size:10px;line-height:11.49px;color:#f4f4f4;letter-spacing:-0.600px;-webkit-text-stroke:0.3px #f4f4f4transform:scaleX(0.9767);transform-origin:0 0;">26°</div>
<svg class="a" style="left:186px;top:685px;" width="22" height="22" viewBox="0 0 22 22"><rect x="2" y="2" width="8.5" height="8.5" fill="#4cc2f0"/><rect x="11.5" y="2" width="8.5" height="8.5" fill="#4cc2f0"/><rect x="2" y="11.5" width="8.5" height="8.5" fill="#3ab0e8"/><rect x="11.5" y="11.5" width="8.5" height="8.5" fill="#3ab0e8"/></svg>
<svg class="a" style="left:223px;top:685px;" width="22" height="22" viewBox="0 0 22 22"><circle cx="10" cy="10" r="6.5" fill="none" stroke="#e8e8e8" stroke-width="2"/><path d="M14.5 14.5l5 5" stroke="#e8e8e8" stroke-width="2.2"/></svg>
<svg class="a" style="left:260px;top:685px;" width="22" height="22" viewBox="0 0 22 22"><rect x="2" y="7" width="12" height="11" fill="#7a7a7a"/><rect x="8" y="3" width="12" height="11" fill="#e0e0e0"/></svg>
<svg class="a" style="left:296px;top:685px;" width="22" height="22" viewBox="0 0 22 22"><defs><linearGradient id="cp1" x1="0" y1="0" x2="0" y2="1"><stop offset="0" stop-color="#3a9af0"/><stop offset="1" stop-color="#8ad050"/></linearGradient><linearGradient id="cp2" x1="0" y1="0" x2="0" y2="1"><stop offset="0" stop-color="#c070e8"/><stop offset="1" stop-color="#f49050"/></linearGradient></defs><path d="M6 2.5h6.5L8 16H3c-1.2 0-2-1-1.6-2.2L4.6 4C5 3 5.4 2.5 6 2.5z" fill="url(#cp1)"/><path d="M10.5 6.5h8.5c1.2 0 2 1 1.6 2.2L17.5 18.5c-.4 1-.9 1.5-1.7 1.5H7z" fill="url(#cp2)"/></svg>
<svg class="a" style="left:333px;top:685px;" width="22" height="22" viewBox="0 0 22 22"><circle cx="15" cy="6" r="3" fill="#7b83eb"/><rect x="11" y="9" width="9" height="9" rx="3" fill="#7b83eb"/><rect x="2" y="6" width="12" height="12" rx="1.5" fill="#5059c9"/><path d="M5 9h6M8 9v7" stroke="#fff" stroke-width="1.6"/></svg>
<svg class="a" style="left:369px;top:685px;" width="22" height="22" viewBox="0 0 22 22"><path d="M1 4h8l2 2h10v14H1z" fill="#e8b830"/><path d="M1 8h20v12H1z" fill="#f8d050"/><rect x="6" y="14" width="10" height="4" fill="#2a6ac8"/></svg>
<svg class="a" style="left:406px;top:685px;" width="22" height="22" viewBox="0 0 22 22"><rect x="6" y="2" width="14" height="18" rx="1.5" fill="#2b7cd3"/><rect x="6" y="2" width="14" height="5" fill="#41a5ee"/><rect x="1" y="6" width="11" height="11" rx="1" fill="#185abd"/><path d="M3 9l1.5 6 1.5-4 1.5 4 1.5-6" fill="none" stroke="#fff" stroke-width="1"/></svg>
<svg class="a" style="left:443px;top:685px;" width="22" height="22" viewBox="0 0 22 22"><path d="M6 2h3l4 12V2h3v18h-3L9 8v12H6z" fill="#e50914"/></svg>
<svg class="a" style="left:479px;top:685px;" width="22" height="22" viewBox="0 0 22 22"><rect x="1" y="1" width="20" height="20" rx="1.5" fill="#1a8ee0"/><rect x="4" y="5" width="14" height="2" fill="#8cc8f4"/><rect x="4" y="9" width="14" height="2" fill="#8cc8f4"/><path d="M5 14c4 2.5 8 2.5 12 0" fill="none" stroke="#bfe0f8" stroke-width="1.3"/></svg>
<svg class="a" style="left:516px;top:685px;" width="22" height="22" viewBox="0 0 22 22"><path d="M7.5 5.5c0-3.5 7-3.5 7 0" fill="none" stroke="#d8d8d8" stroke-width="1.3"/><rect x="2.5" y="5" width="17" height="15" rx="2.5" fill="#f2f2f2"/><rect x="7.5" y="9.5" width="3.2" height="3.2" fill="#e06040"/><rect x="11.3" y="9.5" width="3.2" height="3.2" fill="#80b040"/><rect x="7.5" y="13.3" width="3.2" height="3.2" fill="#40a0e0"/><rect x="11.3" y="13.3" width="3.2" height="3.2" fill="#f0b030"/></svg>
<svg class="a" style="left:553px;top:685px;" width="22" height="22" viewBox="0 0 22 22"><circle cx="11" cy="11" r="8.5" fill="none" stroke="#2aa84a" stroke-width="2.5"/><path d="M3 20l2-5 3 3z" fill="#2aa84a"/><path d="M8 8c0 4 3 7 6 6" fill="none" stroke="#2aa84a" stroke-width="2"/></svg>
<svg class="a" style="left:563px;top:680px;" width="16" height="16" viewBox="0 0 16 16"><circle cx="8" cy="8" r="7" fill="#3a8ae0"/><text x="8" y="11.5" font-size="10" text-anchor="middle" fill="#fff" font-family="Liberation Sans">2</text></svg>
<svg class="a" style="left:589px;top:685px;" width="22" height="22" viewBox="0 0 22 22"><circle cx="11" cy="11" r="9.5" fill="#2aa04a"/><path d="M11 11L2.77 6.25A9.5 9.5 0 0 1 19.23 6.25z" fill="#e0453a"/><path d="M11 11L19.23 6.25A9.5 9.5 0 0 1 11 20.5z" fill="#f4c020"/><circle cx="11" cy="11" r="4.6" fill="#f4f4f4"/><circle cx="11" cy="11" r="3.4" fill="#3a78e0"/></svg>
<div class="a" style="left:597px;top:708px;width:6px;height:2px;background:#9a9a9a;"></div>
<svg class="a" style="left:626px;top:685px;" width="22" height="22" viewBox="0 0 22 22"><circle cx="11" cy="11" r="9.5" fill="#1a7ed0"/><path d="M2 10C3 3 13 0 18.5 6c2 2.5 1.5 6-1.5 6.5H8c0 3 4 5 8 4-3 4-9 5-12 1.5C2.5 16 1.5 13 2 10z" fill="#2fc4a0"/><path d="M7 12.5c0-3 2.5-5 5.5-4.5 2 .3 3 2 3 4.5z" fill="#1a5ab0"/></svg>
<svg class="a" style="left:662px;top:685px;" width="22" height="22" viewBox="0 0 22 22"><path d="M2 7.5L5.5 5.5 15.5 14V3.5L19.5 5.5V16.5L15.5 18.5 5.5 9.5V14.5L2 13z" fill="#9b72e0"/><path d="M15.5 3.5L19.5 5.5V16.5L15.5 18.5z" fill="#b898f0"/></svg>
<svg class="a" style="left:699px;top:685px;" width="22" height="22" viewBox="0 0 22 22"><path d="M16 1l5 2v16l-5 2L5 12l-3 2.5-1-1v-5l1-1L5 10z" fill="#2490e0"/><path d="M16 6v10l-6-5z" fill="#1a2a3a"/></svg>
<svg class="a" style="left:735px;top:685px;" width="22" height="22" viewBox="0 0 22 22"><rect x="1" y="1" width="20" height="20" rx="3" fill="#f4f0ec"/><path d="M4 4h6v6H4zM12 12l6 6" stroke="#c04040" fill="none" stroke-width="1.2"/><text x="14" y="18" font-size="10" fill="#333" font-family="Liberation Sans">S</text></svg>
<svg class="a" style="left:772px;top:685px;" width="22" height="22" viewBox="0 0 22 22"><rect x="4" y="3" width="11" height="16" rx="3" fill="#c8d4e4"/><circle cx="16" cy="17" r="4" fill="#40b050"/><path d="M14 17h4M16 15v4" stroke="#fff" stroke-width="1.2"/></svg>
<div class="a" style="left:805px;top:679px;width:30px;height:32px;background:rgba(255,255,255,0.06);border-radius:4px"></div>
<svg class="a" style="left:809px;top:685px;" width="22" height="22" viewBox="0 0 22 22"><circle cx="11" cy="11" r="9" fill="#2c2255"/><path d="M6 3A9 9 0 0 0 6 19" fill="none" stroke="#f7941e" stroke-width="1.8"/><rect x="8" y="7" width="12" height="1.6" fill="#e8e8f0"/><rect x="7" y="10.2" width="13" height="1.6" fill="#e8e8f0"/><rect x="8" y="13.4" width="12" height="1.6" fill="#e8e8f0"/></svg>
<div class="a" style="left:812px;top:708px;width:16px;height:3px;background:#60b0f0;border-radius:1.5px"></div>
<svg class="a" style="left:846px;top:685px;" width="22" height="22" viewBox="0 0 22 22"><circle cx="11" cy="11" r="10" fill="#f4f4f4"/><path d="M11 3c4 4 4 11 0 16-4-5-4-12 0-16z" fill="#13aa52"/></svg>
<svg class="a" style="left:883px;top:685px;" width="22" height="22" viewBox="0 0 22 22"><circle cx="11" cy="11" r="10" fill="#f4f4f4"/><path d="M6 17l5-12 5 12M8 13h6" fill="none" stroke="#2a7ae0" stroke-width="1.6"/></svg>
<svg class="a" style="left:919px;top:685px;" width="22" height="22" viewBox="0 0 22 22"><circle cx="11" cy="11" r="10" fill="#3aa03a"/><path d="M5 16c0-7 6-10 12-10-1 7-5 11-12 10z" fill="#7ad050"/></svg>
<svg class="a" style="left:956px;top:685px;" width="22" height="22" viewBox="0 0 22 22"><circle cx="11" cy="11" r="9" fill="#2a58d0"/><circle cx="11" cy="11" r="5" fill="#fff"/><circle cx="11" cy="11" r="3" fill="#2a58d0"/></svg>
<div class="a" style="left:964px;top:708px;width:6px;height:2px;background:#9a9a9a;"></div>
<svg class="a" style="left:1040px;top:689px;" width="12" height="8" viewBox="0 0 12 8"><path d="M1.5 6.5l4.5-4.5 4.5 4.5" fill="none" stroke="#f0f0f0" stroke-width="1.4"/></svg>
<svg class="a" style="left:1064px;top:688px;" width="18" height="12" viewBox="0 0 18 12"><path d="M3 11c-3 0-3-5 1-5 1-4 7-4 8 0 4 0 4 5 1 5z" fill="#e8e8e8"/></svg>
<div class="t" style="left:1095.00px;top:689.50px;font-size:10.5px;line-height:12.06px;color:#f0f0f0;letter-spacing:-0.600px;-webkit-text-stroke:0.3px #f0f0f0transform:scaleX(0.9738);transform-origin:0 0;">ENG</div>
<svg class="a" style="left:1128px;top:687px;" width="17" height="14" viewBox="0 0 17 14"><path d="M1.5 5.5a10 10 0 0 1 14 0M3.8 8a6.5 6.5 0 0 1 9.4 0M6 10.5a3 3 0 0 1 5 0" fill="none" stroke="#f0f0f0" stroke-width="1.4"/><circle cx="8.5" cy="12.5" r="1.2" fill="#f0f0f0"/></svg>
<svg class="a" style="left:1149px;top:688px;" width="16" height="13" viewBox="0 0 16 13"><path d="M1 4h3l4-3v11L4 9H1z" fill="none" stroke="#f0f0f0" stroke-width="1.2"/><path d="M10 4l4 4M14 4l-4 4" stroke="#f0f0f0" stroke-width="1.2"/></svg>
<svg class="a" style="left:1168px;top:687px;" width="17" height="14" viewBox="0 0 17 14"><rect x="1" y="4" width="14" height="8" rx="1" fill="#e8e8e8"/><rect x="3" y="1.5" width="4" height="3" fill="#e8e8e8"/></svg>
<div class="t" style="left:1207.00px;top:683.50px;font-size:10.5px;line-height:12.06px;color:#f4f4f4;letter-spacing:-0.518px;-webkit-text-stroke:0.3px #f4f4f4">4:43 PM</div>
<div class="t" style="left:1197.00px;top:696.30px;font-size:10.5px;line-height:12.06px;color:#f4f4f4;letter-spacing:-0.090px;-webkit-text-stroke:0.3px #f4f4f4">12/2/2024</div>
<svg class="a" style="left:1249px;top:686px;" width="16" height="17" viewBox="0 0 16 17"><path d="M2.5 12.5c1.2-1 1.5-3 1.5-6.5a4 4 0 0 1 8 0c0 3.5.3 5.5 1.5 6.5z" fill="#a0d4f0"/><circle cx="8" cy="14.3" r="1.9" fill="#a0d4f0"/></svg>
</body></html>
